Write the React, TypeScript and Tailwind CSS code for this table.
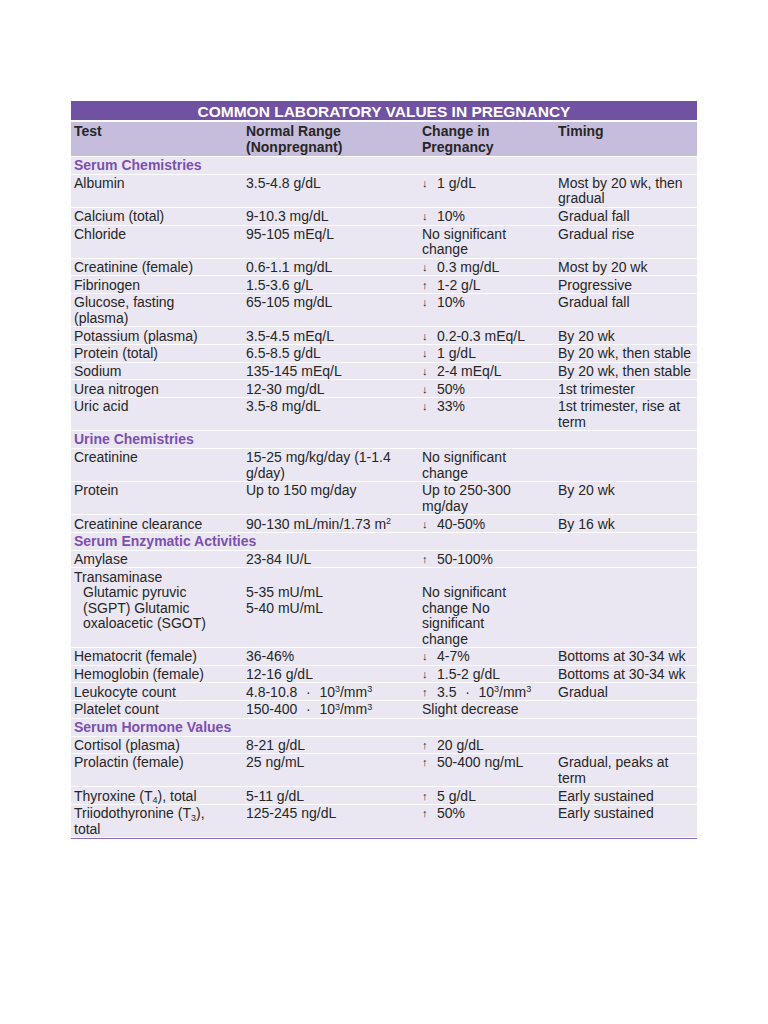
import type { ReactNode } from "react";

function Down() {
  return <span className="inline-block w-[15px] text-[11px] leading-none align-[1px]">↓</span>;
}

function Up() {
  return <span className="inline-block w-[15px] text-[11px] leading-none align-[1px]">↑</span>;
}

function Dot() {
  return <span className="inline-block w-[22px] text-center">·</span>;
}

function Sup({ children }: { children: ReactNode }) {
  return <sup className="text-[9px]">{children}</sup>;
}

function Sub({ children }: { children: ReactNode }) {
  return <sub className="text-[9px]">{children}</sub>;
}

type Row =
  | { section: string }
  | { cells: ReactNode[] };

const rows: Row[] = [
  { section: "Serum Chemistries" },
  { cells: ["Albumin", "3.5-4.8 g/dL", <><Down />1 g/dL</>, <>Most by 20 wk, then<br />gradual</>] },
  { cells: ["Calcium (total)", "9-10.3 mg/dL", <><Down />10%</>, "Gradual fall"] },
  { cells: ["Chloride", "95-105 mEq/L", <>No significant<br />change</>, "Gradual rise"] },
  { cells: ["Creatinine (female)", "0.6-1.1 mg/dL", <><Down />0.3 mg/dL</>, "Most by 20 wk"] },
  { cells: ["Fibrinogen", "1.5-3.6 g/L", <><Up />1-2 g/L</>, "Progressive"] },
  { cells: [<>Glucose, fasting<br />(plasma)</>, "65-105 mg/dL", <><Down />10%</>, "Gradual fall"] },
  { cells: ["Potassium (plasma)", "3.5-4.5 mEq/L", <><Down />0.2-0.3 mEq/L</>, "By 20 wk"] },
  { cells: ["Protein (total)", "6.5-8.5 g/dL", <><Down />1 g/dL</>, "By 20 wk, then stable"] },
  { cells: ["Sodium", "135-145 mEq/L", <><Down />2-4 mEq/L</>, "By 20 wk, then stable"] },
  { cells: ["Urea nitrogen", "12-30 mg/dL", <><Down />50%</>, "1st trimester"] },
  { cells: ["Uric acid", "3.5-8 mg/dL", <><Down />33%</>, <>1st trimester, rise at<br />term</>] },
  { section: "Urine Chemistries" },
  { cells: ["Creatinine", <>15-25 mg/kg/day (1-1.4<br />g/day)</>, <>No significant<br />change</>, ""] },
  { cells: ["Protein", "Up to 150 mg/day", <>Up to 250-300<br />mg/day</>, "By 20 wk"] },
  { cells: ["Creatinine clearance", <>90-130 mL/min/1.73 m<Sup>2</Sup></>, <><Down />40-50%</>, "By 16 wk"] },
  { section: "Serum Enzymatic Activities" },
  { cells: ["Amylase", "23-84 IU/L", <><Up />50-100%</>, ""] },
  {
    cells: [
      <>
        Transaminase
        <div className="pl-[9px]">
          Glutamic pyruvic<br />(SGPT) Glutamic<br />oxaloacetic (SGOT)
        </div>
      </>,
      <><br />5-35 mU/mL<br />5-40 mU/mL</>,
      <><br />No significant<br />change No<br />significant<br />change</>,
      "",
    ],
  },
  { cells: ["Hematocrit (female)", "36-46%", <><Down />4-7%</>, "Bottoms at 30-34 wk"] },
  { cells: ["Hemoglobin (female)", "12-16 g/dL", <><Down />1.5-2 g/dL</>, "Bottoms at 30-34 wk"] },
  {
    cells: [
      "Leukocyte count",
      <>4.8-10.8<Dot />10<Sup>3</Sup>/mm<Sup>3</Sup></>,
      <><Up />3.5<Dot />10<Sup>3</Sup>/mm<Sup>3</Sup></>,
      "Gradual",
    ],
  },
  { cells: ["Platelet count", <>150-400<Dot />10<Sup>3</Sup>/mm<Sup>3</Sup></>, "Slight decrease", ""] },
  { section: "Serum Hormone Values" },
  { cells: ["Cortisol (plasma)", "8-21 g/dL", <><Up />20 g/dL</>, ""] },
  { cells: ["Prolactin (female)", "25 ng/mL", <><Up />50-400 ng/mL</>, <>Gradual, peaks at<br />term</>] },
  { cells: [<>Thyroxine (T<Sub>4</Sub>), total</>, "5-11 g/dL", <><Up />5 g/dL</>, "Early sustained"] },
  { cells: [<>Triiodothyronine (T<Sub>3</Sub>),<br />total</>, "125-245 ng/dL", <><Up />50%</>, "Early sustained"] },
];

const grid = "grid grid-cols-[171px_176px_136px_143px]";

export default function App() {
  return (
    <div
      className="w-[768px] h-[1024px] bg-white pt-[101px] pl-[71px] text-[14px] leading-[15.5px] text-[#262626]"
      style={{ fontFamily: '"Liberation Sans", Arial, sans-serif' }}
    >
      <div className="w-[626px]">
        {/* Title bar */}
        <div className="h-[19px] bg-[#7151a1] text-white font-bold text-[15.5px] leading-[21px] text-center">
          COMMON LABORATORY VALUES IN PREGNANCY
        </div>

        {/* Column headings */}
        <div className={`${grid} mt-[2px] bg-[#c6bcdc] font-bold pt-[2px] pb-[1px] border-b border-white`}>
          <div className="pl-[3px]">Test</div>
          <div className="pl-[4px]">Normal Range<br />(Nonpregnant)</div>
          <div className="pl-[4px]">Change in<br />Pregnancy</div>
          <div className="pl-[4px]">Timing</div>
        </div>

        {/* Body */}
        <div className="border-b border-[#8a6cb8]">
          {rows.map((r, i) =>
            "section" in r ? (
              <div
                key={i}
                className="bg-[#ebe7f2] border-b border-white pt-[1.2px] pl-[3px] font-bold text-[#7a50b0]"
              >
                {r.section}
              </div>
            ) : (
              <div key={i} className={`${grid} bg-[#ebe7f2] border-b border-white pt-[1.2px]`}>
                {r.cells.map((c, j) => (
                  <div key={j} className={`whitespace-nowrap ${j === 0 ? "pl-[3px]" : "pl-[4px]"}`}>
                    {c}
                  </div>
                ))}
              </div>
            )
          )}
        </div>
      </div>
    </div>
  );
}
